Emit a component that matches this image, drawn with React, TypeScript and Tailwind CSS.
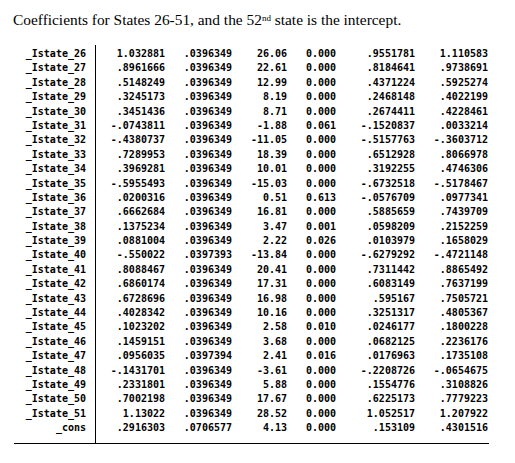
import React from 'react';

type Row = [string, string, string, string, string, string, string];

const rows: Row[] = [
  ['_Istate_26', '1.032881', '.0396349', '26.06', '0.000', '.9551781', '1.110583'],
  ['_Istate_27', '.8961666', '.0396349', '22.61', '0.000', '.8184641', '.9738691'],
  ['_Istate_28', '.5148249', '.0396349', '12.99', '0.000', '.4371224', '.5925274'],
  ['_Istate_29', '.3245173', '.0396349', '8.19', '0.000', '.2468148', '.4022199'],
  ['_Istate_30', '.3451436', '.0396349', '8.71', '0.000', '.2674411', '.4228461'],
  ['_Istate_31', '-.0743811', '.0396349', '-1.88', '0.061', '-.1520837', '.0033214'],
  ['_Istate_32', '-.4380737', '.0396349', '-11.05', '0.000', '-.5157763', '-.3603712'],
  ['_Istate_33', '.7289953', '.0396349', '18.39', '0.000', '.6512928', '.8066978'],
  ['_Istate_34', '.3969281', '.0396349', '10.01', '0.000', '.3192255', '.4746306'],
  ['_Istate_35', '-.5955493', '.0396349', '-15.03', '0.000', '-.6732518', '-.5178467'],
  ['_Istate_36', '.0200316', '.0396349', '0.51', '0.613', '-.0576709', '.0977341'],
  ['_Istate_37', '.6662684', '.0396349', '16.81', '0.000', '.5885659', '.7439709'],
  ['_Istate_38', '.1375234', '.0396349', '3.47', '0.001', '.0598209', '.2152259'],
  ['_Istate_39', '.0881004', '.0396349', '2.22', '0.026', '.0103979', '.1658029'],
  ['_Istate_40', '-.550022', '.0397393', '-13.84', '0.000', '-.6279292', '-.4721148'],
  ['_Istate_41', '.8088467', '.0396349', '20.41', '0.000', '.7311442', '.8865492'],
  ['_Istate_42', '.6860174', '.0396349', '17.31', '0.000', '.6083149', '.7637199'],
  ['_Istate_43', '.6728696', '.0396349', '16.98', '0.000', '.595167', '.7505721'],
  ['_Istate_44', '.4028342', '.0396349', '10.16', '0.000', '.3251317', '.4805367'],
  ['_Istate_45', '.1023202', '.0396349', '2.58', '0.010', '.0246177', '.1800228'],
  ['_Istate_46', '.1459151', '.0396349', '3.68', '0.000', '.0682125', '.2236176'],
  ['_Istate_47', '.0956035', '.0397394', '2.41', '0.016', '.0176963', '.1735108'],
  ['_Istate_48', '-.1431701', '.0396349', '-3.61', '0.000', '-.2208726', '-.0654675'],
  ['_Istate_49', '.2331801', '.0396349', '5.88', '0.000', '.1554776', '.3108826'],
  ['_Istate_50', '.7002198', '.0396349', '17.67', '0.000', '.6225173', '.7779223'],
  ['_Istate_51', '1.13022', '.0396349', '28.52', '0.000', '1.052517', '1.207922'],
  ['_cons', '.2916303', '.0706577', '4.13', '0.000', '.153109', '.4301516'],
];

const colWidths = ['w-[69px]', 'w-[67px]', 'w-[55px]', 'w-[49px]', 'w-[79px]', 'w-[73px]'];

const Column = ({ index, width }: { index: number; width: string }) => (
  <div className={`${width} flex flex-col items-end pt-[2px] pb-[7px]`}>
    {rows.map((r) => (
      <div key={r[0]} className="h-[14.4px] leading-[14.4px] whitespace-pre">
        {r[index]}
      </div>
    ))}
  </div>
);

export default function App() {
  return (
    <div className="w-[515px] h-[463px] bg-white text-black">
      <p className="pl-[13px] pt-[11px] text-[15.4px] leading-[18px] font-[family-name:Liberation_Serif,serif]">
        Coefficients for States 26-51, and the 52<sup className="text-[9px]">nd</sup> state is the intercept.
      </p>
      <div className="ml-[14px] mt-[16px] w-[475px] flex border-b border-black font-[family-name:DejaVu_Sans_Mono,monospace] font-bold text-[10px] text-black">
        <div className="w-[82px] flex flex-col items-end pr-[9px] pt-[2px] pb-[7px] border-r border-black">
          {rows.map((r) => (
            <div key={r[0]} className="h-[14.4px] leading-[14.4px]">
              {r[0]}
            </div>
          ))}
        </div>
        {colWidths.map((w, i) => (
          <Column key={i} index={i + 1} width={w} />
        ))}
      </div>
    </div>
  );
}
